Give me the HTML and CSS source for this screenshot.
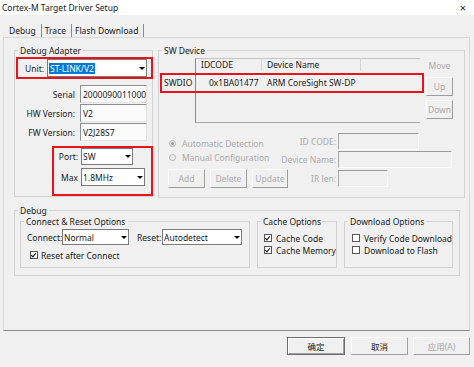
FILE: index.html
```html
<html>
<head>
    <meta charset='UTF-8'>
    <title>Cortex-M Target Driver Setup</title>
    <link rel="stylesheet" href="styles.css">
</head>
<body>
    <div class='window'>
        <div class='titlebar'>
            <span>Cortex-M Target Driver Setup</span>
            <span class='close'>×</span>
        </div>

        <div class='tabs'>
            <span class='tab tab-debug'>Debug</span>
            <span class='tab tab-trace'>Trace</span>
            <span class='tab tab-flash'>Flash Download</span>
        </div>

        <div class='panel'>
            <div class='top-row'>
                <!-- Debug Adapter -->
                <div class='group adapter'>
                    <div class='group-title'>Debug Adapter</div>

                    <div class='unit-row mark'>
                        <span class='unit-lbl'>Unit:</span>
                        <div class='select unit-select'>
                            <span class='val'><span class='picked'>ST-LINK/V2</span></span>
                            <span class='arrow'></span>
                        </div>
                    </div>

                    <div class='info-row first'>
                        <span class='info-lbl'>Serial</span>
                        <div class='field'>20000900110000</div>
                    </div>
                    <div class='info-row'>
                        <span class='info-lbl'>HW Version:</span>
                        <div class='field'>V2</div>
                    </div>
                    <div class='info-row'>
                        <span class='info-lbl'>FW Version:</span>
                        <div class='field'>V2J28S7</div>
                    </div>

                    <div class='port-box mark'>
                        <div class='pm-row'>
                            <span class='pm-lbl'>Port:</span>
                            <div class='select port-select'>
                                <span class='val'>SW</span>
                                <span class='arrow'></span>
                            </div>
                        </div>
                        <div class='pm-row max-row'>
                            <span class='pm-lbl'>Max</span>
                            <div class='select max-select'>
                                <span class='val'>1.8MHz</span>
                                <span class='arrow'></span>
                            </div>
                        </div>
                    </div>
                </div>

                <!-- SW Device -->
                <div class='group device'>
                    <div class='group-title'>SW Device</div>

                    <div class='dev-top'>
                        <div class='dev-list'>
                            <div class='hd hd-id'>IDCODE</div>
                            <div class='hd hd-name'>Device Name</div>
                            <div class='hd hd-rest'></div>
                            <div class='cell c-port'>SWDIO</div>
                            <div class='cell c-id'>0x1BA01477</div>
                            <div class='cell c-name'>ARM CoreSight SW-DP</div>
                            <div class='filler'></div>
                            <div class='dev-mark'></div>
                        </div>

                        <div class='move-col'>
                            <span class='move-lbl'>Move</span>
                            <span class='btn btn-off btn-up'>Up</span>
                            <span class='btn btn-off btn-down'>Down</span>
                        </div>
                    </div>

                    <div class='dev-bottom'>
                        <div class='dev-left'>
                            <div class='radio-row'><span class='radio on'></span>Automatic Detection</div>
                            <div class='radio-row'><span class='radio'></span>Manual Configuration</div>
                            <div class='dev-btns'>
                                <span class='btn btn-off btn-add'>Add</span>
                                <span class='btn btn-off btn-del'>Delete</span>
                                <span class='btn btn-off btn-upd'>Update</span>
                            </div>
                        </div>

                        <div class='dev-right'>
                            <div class='dev-field'>
                                <span class='dev-lbl'>ID CODE:</span>
                                <div class='field off w-id'></div>
                            </div>
                            <div class='dev-field'>
                                <span class='dev-lbl'>Device Name:</span>
                                <div class='field off w-name'></div>
                            </div>
                            <div class='dev-field ir'>
                                <span class='dev-lbl'>IR len:</span>
                                <div class='field off w-ir'></div>
                            </div>
                        </div>
                    </div>
                </div>
            </div>

            <!-- Debug -->
            <div class='group debug'>
                <div class='group-title'>Debug</div>

                <div class='debug-row'>
                    <div class='group conn'>
                        <div class='group-title'>Connect &amp; Reset Options</div>
                        <div class='conn-row'>
                            <span class='conn-lbl'>Connect:</span>
                            <div class='select conn-select'>
                                <span class='val'>Normal</span>
                                <span class='arrow'></span>
                            </div>
                            <span class='reset-lbl'>Reset:</span>
                            <div class='select reset-select'>
                                <span class='val'>Autodetect</span>
                                <span class='arrow'></span>
                            </div>
                        </div>
                        <div class='check-row conn-check'><span class='check on'></span>Reset after Connect</div>
                    </div>

                    <div class='group cache'>
                        <div class='group-title'>Cache Options</div>
                        <div class='opt-list'>
                            <div class='check-row'><span class='check on'></span>Cache Code</div>
                            <div class='check-row'><span class='check on'></span>Cache Memory</div>
                        </div>
                    </div>

                    <div class='group download'>
                        <div class='group-title'>Download Options</div>
                        <div class='opt-list'>
                            <div class='check-row'><span class='check'></span>Verify Code Download</div>
                            <div class='check-row'><span class='check'></span>Download to Flash</div>
                        </div>
                    </div>
                </div>
            </div>
        </div>

        <div class='footer'>
            <span class='btn btn-main btn-ok'>确定</span>
            <span class='btn btn-main btn-cancel'>取消</span>
            <span class='btn btn-main btn-apply'>应用(A)</span>
        </div>
    </div>
</body>
</html>
```

FILE: styles.css
```css
html, body {
    margin: 0;
    padding: 0;
    background: #f0f0f0;
    color: #1a1a1a;
    font-family: 'Noto Sans', 'Noto Sans CJK SC', sans-serif;
    font-size: 8.5px;
}

.window {
    width: 474px;
    height: 367px;
    background: #f0f0f0;
    overflow: hidden;
}

.titlebar {
    height: 15px;
    background: #fff;
    display: flex;
    align-items: center;
    justify-content: space-between;
    padding: 0 8px 0 2px;
}

.close {
    font-size: 11px;
}

/* tabs */
.tabs {
    height: 22px;
    display: flex;
    align-items: flex-end;
    padding-left: 4px;
    box-sizing: border-box;
}

.tab {
    height: 13px;
    line-height: 13px;
    border-right: 1px solid #8a8a8a;
    padding: 0 5px 0 3px;
}

.tab-debug { padding-left: 5px; }

/* main panel */
.panel {
    margin-left: 3px;
    width: 467px;
    height: 294px;
    box-sizing: border-box;
    border: 1px solid #d9d9d9;
    border-bottom-color: #8c8c8c;
    padding: 12px 0 0 10px;
}

.top-row {
    display: flex;
    gap: 5px;
}

.group {
    border: 1px solid #d3d3d3;
    box-sizing: border-box;
}

.group-title {
    width: fit-content;
    height: 11px;
    line-height: 11px;
    margin: -6px 0 -5px 3px;
    padding: 0 2px;
    background: #f0f0f0;
    white-space: nowrap;
}

.mark {
    outline: 2px solid #e8141b;
}

/* common controls */
.select {
    box-sizing: border-box;
    height: 100%;
    display: flex;
    align-items: center;
    background: #fff;
    border: 1px solid #7a7a7a;
    padding-left: 1px;
    flex-shrink: 0;
}

.select .val {
    flex: 1;
    white-space: nowrap;
    overflow: hidden;
}

.arrow {
    width: 9px;
    height: 100%;
    display: flex;
    align-items: center;
    justify-content: center;
}

.arrow::after {
    content: '';
    border-left: 3px solid transparent;
    border-right: 3px solid transparent;
    border-top: 3px solid #000;
}

.field {
    box-sizing: border-box;
    height: 100%;
    background: #fbfbfb;
    border: 1px solid #e3e3e3;
    border-top-color: #8f8f8f;
    border-left-color: #8f8f8f;
    padding-left: 2px;
    display: flex;
    align-items: center;
    white-space: nowrap;
    overflow: hidden;
    flex-shrink: 0;
}

.field.off {
    background: #f0f0f0;
    border-color: #fff;
    border-top-color: #9a9a9a;
    border-left-color: #a8a8a8;
}

.btn {
    box-sizing: border-box;
    display: flex;
    align-items: center;
    justify-content: center;
    background: #f0f0f0;
    border: 1px solid #fff;
    border-right-color: #9c9c9c;
    border-bottom-color: #9c9c9c;
}

.btn-off {
    color: #ababab;
}

.check {
    box-sizing: border-box;
    flex-shrink: 0;
    width: 8px;
    height: 8px;
    border: 1px solid #555;
    background: #fff;
    margin-right: 4px;
    position: relative;
}

.check.on::after {
    content: '';
    position: absolute;
    left: 1px;
    top: 0px;
    width: 2px;
    height: 4px;
    border-right: 1.5px solid #111;
    border-bottom: 1.5px solid #111;
    transform: rotate(40deg);
}

.radio {
    box-sizing: border-box;
    flex-shrink: 0;
    width: 7px;
    height: 7px;
    border: 1px solid #b4b4b4;
    border-radius: 50%;
    margin-right: 6px;
    display: flex;
    align-items: center;
    justify-content: center;
}

.radio.on::after {
    content: '';
    width: 3px;
    height: 3px;
    border-radius: 50%;
    background: #9a9a9a;
}

/* Debug Adapter */
.adapter {
    width: 139px;
    height: 147px;
}

.unit-row {
    box-sizing: border-box;
    width: 133px;
    height: 18px;
    margin: 8px 0 0 3px;
    padding-left: 7px;
    display: flex;
    align-items: center;
}

.unit-lbl {
    width: 22px;
}

.unit-select {
    width: 100px;
}

.picked {
    background: #0078d7;
    color: #fff;
    padding: 1px 1px;
}

.info-row {
    display: flex;
    align-items: center;
    height: 18px;
    margin-top: 1px;
}

.info-row.first {
    margin-top: 8px;
}

.info-lbl {
    width: 60px;
    text-align: right;
    margin-right: 5px;
}

.info-row .field {
    width: 67px;
}

.port-box {
    box-sizing: border-box;
    width: 97px;
    height: 46px;
    margin: 7px 0 0 39px;
}

.pm-row {
    display: flex;
    align-items: center;
    height: 17px;
}

.max-row {
    height: 18px;
    margin-top: 3px;
}

.pm-lbl {
    width: 24px;
    text-align: right;
    margin-right: 3px;
}

.port-select { width: 52px; }
.max-select { width: 64px; }

/* SW Device */
.device {
    width: 307px;
    height: 148px;
}

.dev-top {
    display: flex;
    margin-top: 7px;
}

.dev-list {
    margin-left: 2px;
    width: 259px;
    height: 65px;
    display: grid;
    grid-template-columns: 34px 67px 99px 59px;
    grid-template-rows: 13px 22px 1fr;
}

.hd {
    grid-row: 1;
    line-height: 12px;
    border-top: 1px solid #c4c4c4;
    border-right: 1px solid #d6d6d6;
    padding-left: 5px;
}

.hd-id { grid-column: 2; border-left: 1px solid #8a8a8a; }
.hd-name { grid-column: 3; padding-left: 5px; }
.hd-rest { grid-column: 4; border-right: none; }

.cell {
    grid-row: 2;
    display: flex;
    align-items: center;
    white-space: nowrap;
}

.c-port { grid-column: 1; padding-left: 3px; }
.c-id { grid-column: 2; border-left: 1px solid #8a8a8a; padding-left: 13px; }
.c-name { grid-column: 3 / 5; padding-left: 5px; }

.filler {
    grid-row: 3;
    grid-column: 2 / 5;
    border-left: 1px solid #8a8a8a;
    border-bottom: 1px solid #a8a8a8;
}

.dev-mark {
    grid-row: 2;
    grid-column: 1 / -1;
    margin: 4px -2px 2px 1px;
    outline: 2px solid #e8141b;
}

.move-col {
    width: 27px;
    margin-left: 6px;
    display: flex;
    flex-direction: column;
}

.move-lbl {
    margin-top: 2px;
    line-height: 12px;
    text-align: center;
    color: #ababab;
}

.btn-up, .btn-down {
    height: 19px;
}

.btn-up { margin-top: 5px; }
.btn-down { margin-top: 4px; }

.dev-bottom {
    display: flex;
    margin-top: 10px;
}

.dev-left {
    width: 121px;
    flex-shrink: 0;
    box-sizing: border-box;
    padding: 3px 0 0 10px;
    color: #ababab;
}

.radio-row {
    height: 14px;
    display: flex;
    align-items: center;
    white-space: nowrap;
}

.dev-btns {
    display: flex;
    gap: 5px;
    margin: 5px 0 0 -1px;
}

.dev-btns .btn {
    width: 37px;
    height: 19px;
    flex-shrink: 0;
}

.dev-btns .btn-upd { width: 36px; }

.dev-right {
    display: flex;
    flex-direction: column;
}

.dev-field {
    display: flex;
    align-items: center;
    height: 17px;
    margin-bottom: 1px;
}

.dev-field.ir {
    margin-top: 1px;
}

.dev-lbl {
    width: 56px;
    margin-right: 2px;
    text-align: right;
    white-space: nowrap;
    color: #ababab;
}

.w-id { width: 81px; }
.w-name { width: 114px; }
.w-ir { width: 50px; }

/* Debug */
.debug {
    width: 446px;
    height: 66px;
    margin-top: 12px;
}

.debug-row {
    display: flex;
    margin: 10px 0 0 5px;
}

.conn {
    width: 230px;
    height: 47px;
}

.cache {
    width: 80px;
    height: 47px;
    margin-left: 7px;
}

.download {
    width: 109px;
    height: 47px;
    margin-left: 7px;
}

.conn-row {
    display: flex;
    align-items: center;
    height: 16px;
    margin-top: 7px;
    padding-left: 6px;
}

.conn-lbl { width: 35px; }
.conn-select { width: 67px; }
.reset-lbl { width: 25px; margin-left: 8px; }
.reset-select { width: 80px; }

.check-row {
    display: flex;
    align-items: center;
    height: 12px;
    white-space: nowrap;
}

.conn-check {
    height: 14px;
    margin-top: 3px;
    padding-left: 9px;
}

.conn-check .check { margin-right: 3px; }

.opt-list {
    margin-top: 10px;
    padding-left: 6px;
}

.download .opt-list { padding-left: 7px; }

/* footer buttons */
.footer {
    display: flex;
    justify-content: flex-end;
    padding: 6px 4px 0 0;
}

.btn-main {
    height: 18px;
    width: 57px;
    margin-left: 5px;
    border-color: #fff #a0a0a0 #a0a0a0 #fff;
}

.btn-ok {
    width: 58px;
    border: 1px solid #6e6e6e;
    box-shadow: inset 1px 1px 0 #fff, inset -1px -1px 0 #a0a0a0;
}

.btn-cancel { margin-left: 6px; }
.btn-apply { color: #a8a8a8; }
```
